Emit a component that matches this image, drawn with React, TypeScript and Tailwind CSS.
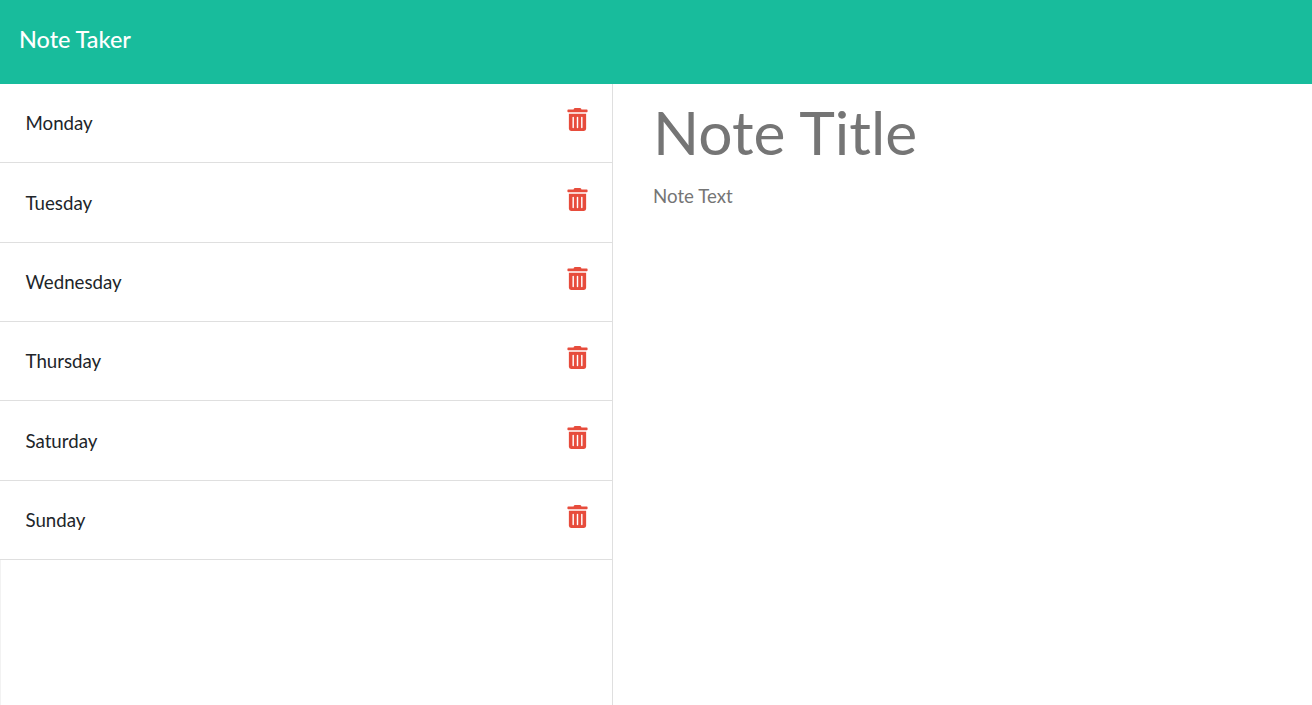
import { FaTrashAlt } from 'react-icons/fa';

const NOTES = ['Monday', 'Tuesday', 'Wednesday', 'Thursday', 'Saturday', 'Sunday'];

export default function App() {
    return (
        <div className="h-[705px] overflow-hidden bg-white font-['Lato',sans-serif]">
            {/* Navbar */}
            <nav className="h-[84px] bg-[#18bc9c] flex items-center px-[19px] pb-[4px]">
                <span className="text-[23.4px] font-medium text-white">Note Taker</span>
            </nav>

            <div className="flex h-[621px]">
                {/* Note list */}
                <div className="w-[613px] border-r border-[#dfdfdf] flex flex-col">
                    <ul>
                        {NOTES.map((note) => (
                            <li
                                key={note}
                                className="h-[79.33px] flex items-center justify-between pl-[25.5px] pr-[23px] pt-[0.5px] border-b border-[#dfdfdf]"
                            >
                                <span className="text-[18.7px] text-[#212529]">{note}</span>
                                <FaTrashAlt className="text-[#e74c3c] text-[23px] -mt-[7px]" />
                            </li>
                        ))}
                    </ul>
                    <div className="flex-1 border-l border-[#f2f2f2]" />
                </div>

                {/* Note editor */}
                <div className="flex-1 pl-[40px] pt-[12px]">
                    <div className="text-[60.5px] leading-[72px] text-[#757575]">Note Title</div>
                    <div className="mt-[14px] text-[18.7px] text-[#757575]">Note Text</div>
                </div>
            </div>
        </div>
    );
}
